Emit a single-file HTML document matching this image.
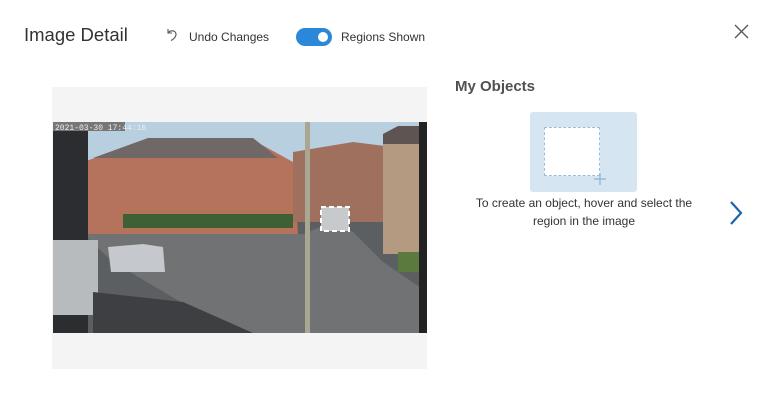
<!DOCTYPE html>
<html><head><style>
body{margin:0;width:766px;height:406px;background:#fff;font-family:"Liberation Sans",sans-serif;position:relative;overflow:hidden}
.a{position:absolute}
</style></head><body>
<div class="a" style="left:24px;top:24px;font-size:18.5px;color:#333">Image Detail</div>
<svg class="a" style="left:166px;top:28px" width="12" height="14" viewBox="0 0 12 14"><path d="M2 1v4h4M2.5 4.5C4 2.5 8 2 9.5 4.5 11 7 9 10.5 5 12.5" fill="none" stroke="#555" stroke-width="1.1"/></svg>
<div class="a" style="left:189px;top:30px;font-size:12px;color:#333">Undo Changes</div>
<div class="a" style="left:296px;top:28px;width:36px;height:18px;border-radius:9px;background:#2b88d8"></div>
<div class="a" style="left:318px;top:32px;width:10px;height:10px;border-radius:5px;background:#fff"></div>
<div class="a" style="left:341px;top:30px;font-size:12px;color:#333">Regions Shown</div>
<svg class="a" style="left:734px;top:24px" width="15" height="15"><path d="M1 1L14 14M14 1L1 14" stroke="#555" stroke-width="1.3"/></svg>
<div class="a" style="left:52px;top:87px;width:375px;height:282px;background:#f4f4f4"></div>
<svg class="a" style="left:53px;top:122px" width="374" height="211" viewBox="0 0 374 211">
<rect width="374" height="211" fill="#5c5f62"/>
<rect width="374" height="40" fill="#b8cfe0"/>
<polygon points="30,40 95,18 200,18 240,40 245,112 30,112" fill="#b5735c"/>
<polygon points="40,36 95,16 200,16 225,36" fill="#6f6866"/>
<polygon points="240,30 300,20 340,25 340,100 240,100" fill="#a0705e"/>
<rect x="330" y="12" width="40" height="120" fill="#b59a82"/>
<polygon points="330,12 345,4 370,4 370,22 330,22" fill="#5e5452"/>
<rect x="70" y="92" width="170" height="14" fill="#3f5f35"/>
<polygon points="30,112 250,112 280,100 300,110 330,140 374,170 374,211 180,211 60,140" fill="#707274"/>
<rect x="345" y="130" width="29" height="20" fill="#5b7a3e"/>
<rect x="0" y="0" width="35" height="211" fill="#2b2d30"/>
<rect x="0" y="118" width="45" height="75" fill="#b8bbbe"/>
<polygon points="40,170 130,180 200,211 40,211" fill="#3d3f42"/>
<polygon points="55,125 90,122 110,125 112,150 58,150" fill="#c5c8cc"/>
<rect x="252" y="0" width="5" height="211" fill="#a9a691"/>
<rect x="268" y="85" width="28" height="24" fill="#c6cacc"/>
<rect x="268" y="85" width="28" height="24" fill="none" stroke="#fff" stroke-width="2" stroke-dasharray="5 3"/>
<rect x="366" y="0" width="8" height="211" fill="#222"/>
<rect x="0" y="0" width="72" height="9" fill="#777"/>
<text x="2" y="8" font-size="8" fill="#eee" font-family="Liberation Mono">2021-03-30 17:44:16</text>
</svg>
<div class="a" style="left:455px;top:78px;font-size:15px;font-weight:bold;color:#505050">My Objects</div>
<div class="a" style="left:530px;top:112px;width:107px;height:80px;background:#d5e5f1;border-radius:3px"></div>
<div class="a" style="left:544px;top:127px;width:54px;height:47px;background:#fff;border:1px dashed #9cbdd8"></div>
<svg class="a" style="left:593px;top:172px" width="14" height="14"><path d="M7 1v12M1 7h12" stroke="#8fb4d6" stroke-width="1.3"/></svg>
<div class="a" style="left:460px;top:194px;width:248px;text-align:center;font-size:12px;line-height:18px;color:#333">To create an object, hover and select the region in the image</div>
<svg class="a" style="left:729px;top:200px" width="14" height="26"><path d="M2 2L12 13 2 24" fill="none" stroke="#1a63b0" stroke-width="2.2"/></svg>
</body></html>
